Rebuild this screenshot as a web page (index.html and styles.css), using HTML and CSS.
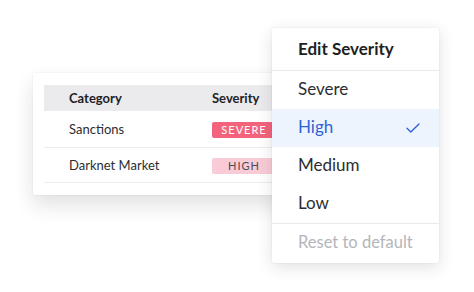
FILE: index.html
```html
<!DOCTYPE html>
<html>
<head>
	<meta charset="UTF-8">
	<title>Edit Severity</title>
	<link rel="stylesheet" href="styles.css">
</head>
<body>
	<div class="stage">
		<div class="card">
			<div class="row head">
				<div class="cell cat">Category</div>
				<div class="cell sev">Severity</div>
			</div>
			<div class="row">
				<div class="cell cat">Sanctions</div>
				<div class="cell sev"><span class="badge severe">SEVERE</span></div>
			</div>
			<div class="row">
				<div class="cell cat">Darknet Market</div>
				<div class="cell sev"><span class="badge high">HIGH</span></div>
			</div>
		</div>

		<div class="menu">
			<div class="menu-title">Edit Severity</div>
			<ul class="menu-list">
				<li>Severe</li>
				<li class="active">High
					<svg class="check" width="14" height="10" viewBox="0 0 14 10">
						<path d="M1 5.2 L4.8 9 L13 1" fill="none" stroke="#2f63d6" stroke-width="1.4" stroke-linecap="round" stroke-linejoin="round"/>
					</svg>
				</li>
				<li>Medium</li>
				<li>Low</li>
			</ul>
			<div class="menu-reset">Reset to default</div>
		</div>
	</div>
</body>
</html>
```

FILE: styles.css
```css
* {
	margin: 0;
	padding: 0;
	box-sizing: border-box;
}

body {
	font-family: Lato, "Noto Sans", sans-serif;
	color: #2b2d33;
	background: #fff;
	width: 474px;
	height: 292px;
	overflow: hidden;
}

ul {
	list-style: none;
}

.stage {
	position: relative;
	height: 292px;
	padding: 73px 0 0 33px;
}

/* table card */
.card {
	width: 270px;
	padding: 12px 0 12px 11px;
	background: #fff;
	border-radius: 2px;
	box-shadow: 0 10px 20px rgba(40, 44, 60, 0.14), 0 0 2px rgba(40, 44, 60, 0.08);
}

.row {
	display: flex;
	align-items: center;
	height: 37px;
	border-bottom: 1px solid #ececef;
	font-size: 13px;
}

.row.head {
	height: 26px;
	background: #ebebed;
	border-bottom: 0;
	font-weight: 700;
	color: #1f2126;
}

.row + .row + .row {
	height: 35px;
}

.cell.cat {
	width: 168px;
	padding-left: 25px;
}

.cell.sev {
	flex: 1;
}

.badge {
	display: inline-block;
	width: 64px;
	height: 16px;
	line-height: 16px;
	font-size: 11px;
	letter-spacing: 1px;
	text-align: center;
	border-radius: 2px;
}

.badge.severe {
	background: #f3637c;
	color: #fff;
}

.badge.high {
	background: #f9cbd6;
	color: #4a4b50;
}

/* overlay menu */
.menu {
	position: absolute;
	left: 272px;
	top: 28px;
	width: 167px;
	height: 235px;
	background: #fff;
	border-radius: 2px;
	box-shadow: 0 4px 16px rgba(40, 44, 60, 0.14), 0 0 2px rgba(40, 44, 60, 0.1);
}

.menu-title {
	height: 43px;
	padding: 0 0 2px 26px;
	display: flex;
	align-items: center;
	font-size: 17px;
	font-weight: 700;
	color: #1d1f24;
	border-bottom: 1px solid #e9e9ec;
}

.menu-list li {
	height: 38px;
	padding: 0 19px 3px 26px;
	display: flex;
	align-items: center;
	justify-content: space-between;
	font-size: 17px;
	color: #2b2d33;
}

.menu-list li.active {
	background: #eef4fd;
	color: #2f63d6;
}

.menu-list li.active .check {
	margin-top: 3px;
}

.menu-reset {
	height: 40px;
	padding: 0 0 3px 26px;
	display: flex;
	align-items: center;
	border-top: 1px solid #e9e9ec;
	font-size: 16.5px;
	color: #b4b5ba;
}
```
